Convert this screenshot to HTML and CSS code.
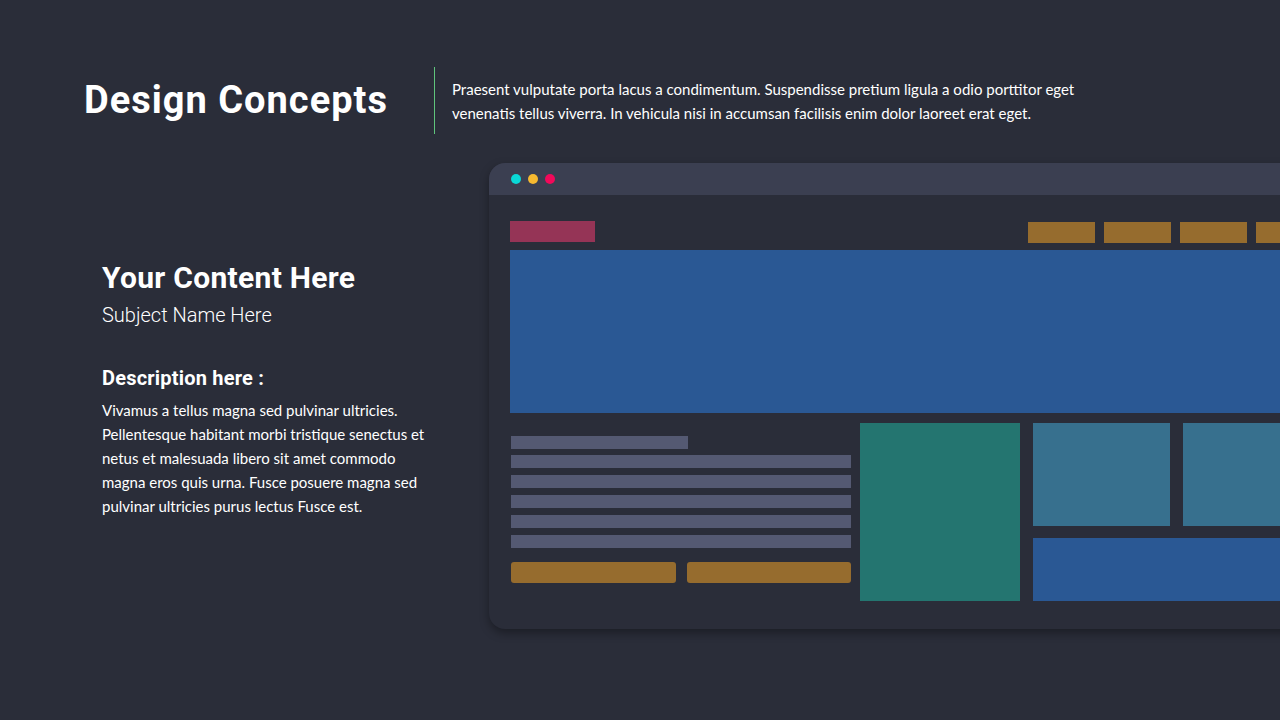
FILE: index.html
```html
<!DOCTYPE html>
<html lang="en">
<head>
<meta charset="utf-8">
<title>Design Concepts</title>
<link rel="stylesheet" href="styles.css">
</head>
<body>
<div class="slide">
  <header class="header">
    <h1 class="title">Design Concepts</h1>
    <div class="divider"></div>
    <p class="intro">Praesent vulputate porta lacus a condimentum. Suspendisse pretium ligula a odio porttitor eget<br>venenatis tellus viverra. In vehicula nisi in accumsan facilisis enim dolor laoreet erat eget.</p>
  </header>
  <main class="main">
    <section class="info">
      <h2 class="info-title">Your Content Here</h2>
      <p class="info-sub">Subject Name Here</p>
      <h3 class="info-label">Description here :</h3>
      <p class="info-text">Vivamus a tellus magna sed pulvinar ultricies.<br>Pellentesque habitant morbi tristique senectus et<br>netus et malesuada libero sit amet commodo<br>magna eros quis urna. Fusce posuere magna sed<br>pulvinar ultricies purus lectus Fusce est.</p>
    </section>
    <div class="window">
      <div class="titlebar">
        <span class="dot dot-cyan"></span>
        <span class="dot dot-yellow"></span>
        <span class="dot dot-pink"></span>
      </div>
      <div class="page">
        <div class="nav-row">
          <div class="logo"></div>
          <div class="nav">
            <span class="nav-btn"></span>
            <span class="nav-btn"></span>
            <span class="nav-btn"></span>
            <span class="nav-btn"></span>
          </div>
        </div>
        <div class="hero"></div>
        <div class="lower">
          <div class="text-block">
            <div class="line line-short"></div>
            <div class="line"></div>
            <div class="line"></div>
            <div class="line"></div>
            <div class="line"></div>
            <div class="line"></div>
            <div class="buttons">
              <span class="btn"></span>
              <span class="btn"></span>
            </div>
          </div>
          <div class="teal"></div>
          <div class="tiles">
            <div class="tile"></div>
            <div class="tile"></div>
            <div class="wide"></div>
          </div>
        </div>
      </div>
    </div>
  </main>
</div>
</body>
</html>
```

FILE: styles.css
```css
* { box-sizing: border-box; }
html, body { margin: 0; padding: 0; background: #2a2d39; }
.slide {
  width: 1280px;
  height: 720px;
  overflow: hidden;
  background: #2a2d39;
  color: #ffffff;
  font-family: "Lato", "Open Sans", sans-serif;
}
.header {
  display: flex;
  align-items: center;
  padding: 67px 0 0 84px;
  height: 134px;
}
.title {
  margin: 0;
  width: 350px;
  flex: none;
  font-family: "Roboto", "Open Sans", sans-serif;
  font-weight: 700;
  font-size: 38px;
  letter-spacing: 1px;
  line-height: 1;
  padding-bottom: 2px;
}
.divider {
  flex: none;
  width: 1px;
  height: 67px;
  background: #5fc47c;
}
.intro {
  margin: 0 0 0 17px;
  font-size: 15px;
  line-height: 24px;
  color: #ffffff;
  white-space: nowrap;
}
.main {
  display: flex;
  align-items: flex-start;
  padding-top: 29px;
}
.info {
  flex: none;
  width: 489px;
  padding: 97px 0 0 102px;
}
.info-title {
  margin: 0;
  font-family: "Roboto", "Open Sans", sans-serif;
  font-weight: 700;
  font-size: 30px;
  letter-spacing: 0.3px;
  line-height: 36px;
}
.info-sub {
  margin: 5px 0 0;
  font-family: "Roboto", "Open Sans", sans-serif;
  font-weight: 300;
  font-size: 20px;
  line-height: 28px;
}
.info-label {
  margin: 36px 0 0;
  font-family: "Roboto", "Open Sans", sans-serif;
  font-weight: 700;
  font-size: 20px;
  letter-spacing: 0.2px;
  line-height: 26px;
}
.info-text {
  margin: 7px 0 0;
  font-size: 15px;
  line-height: 24px;
  white-space: nowrap;
}
.window {
  flex: none;
  width: 880px;
  border-radius: 16px;
  background: #2a2d39;
  box-shadow: 0 4px 10px rgba(0, 0, 0, 0.35);
  overflow: hidden;
}
.titlebar {
  height: 32px;
  background: #3b3f51;
  display: flex;
  align-items: center;
  gap: 7px;
  padding-left: 22px;
}
.dot {
  width: 10px;
  height: 10px;
  border-radius: 50%;
}
.dot-cyan { background: #0ad8d6; }
.dot-yellow { background: #f6b930; }
.dot-pink { background: #f2095a; }
.page {
  padding: 26px 0 28px 21px;
  width: 834px;
}
.nav-row {
  display: flex;
  justify-content: space-between;
  align-items: flex-start;
}
.logo {
  width: 85px;
  height: 21px;
  background: #953456;
}
.nav {
  display: flex;
  gap: 9px;
  padding-top: 1px;
}
.nav-btn {
  width: 67px;
  height: 21px;
  background: #966c2e;
}
.hero {
  margin-top: 7px;
  height: 163px;
  background: #2a5894;
}
.lower {
  display: flex;
  align-items: flex-start;
  margin-top: 10px;
}
.text-block {
  width: 341px;
  padding: 13px 0 0 1px;
}
.line {
  height: 13px;
  background: #545972;
  margin-bottom: 7px;
}
.line-short {
  width: 177px;
  margin-bottom: 6px;
}
.buttons {
  display: flex;
  gap: 11px;
  margin-top: 14px;
}
.btn {
  flex: 1;
  height: 21px;
  border-radius: 3px;
  background: #966c2e;
}
.teal {
  margin-left: 9px;
  width: 160px;
  height: 178px;
  background: #247570;
}
.tiles {
  margin-left: 13px;
  display: grid;
  grid-template-columns: 137px 137px;
  grid-template-rows: 103px 63px;
  column-gap: 13px;
  row-gap: 12px;
}
.tile { background: #37708e; }
.wide {
  grid-column: 1 / 3;
  background: #2a5894;
}
```
